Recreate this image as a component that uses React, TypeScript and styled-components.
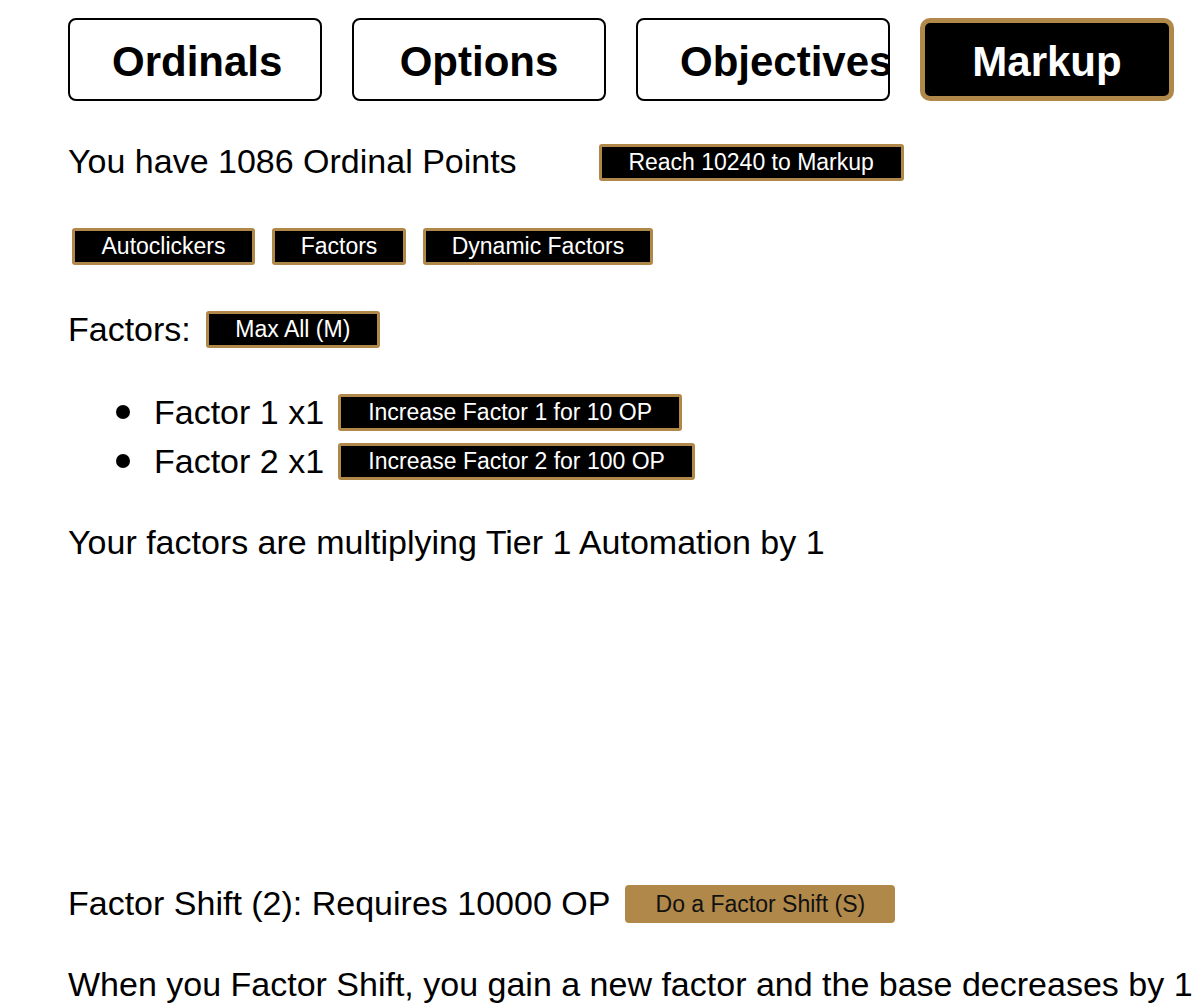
import React from 'react';
import styled, { createGlobalStyle } from 'styled-components';

const GlobalStyle = createGlobalStyle`
  html, body {
    margin: 0;
    padding: 0;
    background: #fff;
  }
  body {
    font-family: 'Liberation Sans', Arial, sans-serif;
    color: #000;
  }
`;

const GOLD = '#b0884a';

const Page = styled.div`
  padding: 18px 0 0 68px;
  width: 1200px;
  box-sizing: border-box;
  overflow: hidden;
  height: 1005px;
`;

const TabBar = styled.div`
  display: flex;
  gap: 30px;
`;

const Tab = styled.button<{ $active?: boolean }>`
  flex-shrink: 0;
  box-sizing: border-box;
  width: 254px;
  height: 83px;
  padding: 4px 42px 0;
  overflow: hidden;
  white-space: nowrap;
  font-family: inherit;
  font-size: 42px;
  font-weight: bold;
  border-radius: ${(p) => (p.$active ? '10px' : '8px')};
  border: ${(p) => (p.$active ? `5px solid ${GOLD}` : '2px solid #000')};
  background: ${(p) => (p.$active ? '#000' : '#fff')};
  color: ${(p) => (p.$active ? '#fff' : '#000')};
  display: flex;
  align-items: center;
  justify-content: flex-start;
`;

const TabLabel = styled.span`
  margin: 0 auto;
`;

const Row = styled.div<{ $top: number; $gap?: number; $indent?: number }>`
  display: flex;
  align-items: center;
  gap: ${(p) => p.$gap ?? 16}px;
  margin-top: ${(p) => p.$top}px;
  padding-left: ${(p) => p.$indent ?? 0}px;
`;

const Text = styled.span`
  font-size: 34px;
  line-height: 40px;
  white-space: nowrap;
`;

const GameButton = styled.button<{ $width?: number; $drop?: number }>`
  flex-shrink: 0;
  box-sizing: border-box;
  height: 37px;
  padding: 0;
  margin-top: ${(p) => p.$drop ?? 0}px;
  ${(p) => (p.$width ? `width: ${p.$width}px;` : '')}
  background: #000;
  color: #fff;
  border: 3px solid ${GOLD};
  border-radius: 3px;
  font-family: inherit;
  font-size: 23px;
  white-space: nowrap;
`;

const ShiftButton = styled.button`
  flex-shrink: 0;
  box-sizing: border-box;
  height: 38px;
  width: 270px;
  padding: 0;
  margin-top: 2px;
  background: ${GOLD};
  color: #111;
  border: none;
  border-radius: 4px;
  font-family: inherit;
  font-size: 23px;
  white-space: nowrap;
`;

const FactorList = styled.ul`
  list-style: none;
  margin: 43px 0 0 0;
  padding: 0 0 0 48px;
  display: flex;
  flex-direction: column;
  gap: 9px;
`;

const FactorItem = styled.li`
  display: flex;
  align-items: center;
  gap: 14px;
  &::before {
    content: '';
    width: 14px;
    height: 14px;
    border-radius: 50%;
    background: #000;
    margin-right: 10px;
  }
`;

const factors = [
  { id: 1, mult: 1, cost: 10, width: 344 },
  { id: 2, mult: 1, cost: 100, width: 357 },
];

export default function App() {
  return (
    <Page>
      <GlobalStyle />
      <TabBar>
        <Tab><TabLabel>Ordinals</TabLabel></Tab>
        <Tab><TabLabel>Options</TabLabel></Tab>
        <Tab>Objectives</Tab>
        <Tab $active><TabLabel>Markup</TabLabel></Tab>
      </TabBar>

      <Row $top={39} $gap={82}>
        <Text>You have 1086 Ordinal Points</Text>
        <GameButton $width={305} $drop={4}>Reach 10240 to Markup</GameButton>
      </Row>

      <Row $top={47} $gap={17} $indent={4}>
        <GameButton $width={183}>Autoclickers</GameButton>
        <GameButton $width={134}>Factors</GameButton>
        <GameButton $width={230}>Dynamic Factors</GameButton>
      </Row>

      <Row $top={44} $gap={15}>
        <Text>Factors:</Text>
        <GameButton $width={174}>Max All (M)</GameButton>
      </Row>

      <FactorList>
        {factors.map((f) => (
          <FactorItem key={f.id}>
            <Text>Factor {f.id} x{f.mult}</Text>
            <GameButton $width={f.width}>Increase Factor {f.id} for {f.cost} OP</GameButton>
          </FactorItem>
        ))}
      </FactorList>

      <Row $top={41}>
        <Text>Your factors are multiplying Tier 1 Automation by 1</Text>
      </Row>

      <Row $top={321} $gap={15}>
        <Text>Factor Shift (2): Requires 10000 OP</Text>
        <ShiftButton>Do a Factor Shift (S)</ShiftButton>
      </Row>

      <Row $top={41}>
        <Text>When you Factor Shift, you gain a new factor and the base decreases by 1</Text>
      </Row>
    </Page>
  );
}
